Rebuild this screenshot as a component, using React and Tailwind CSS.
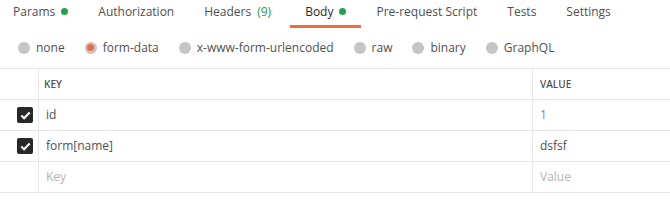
const tabs = [
  { label: "Params", dot: true },
  { label: "Authorization" },
  { label: "Headers", count: "(9)" },
  { label: "Body", dot: true, active: true },
  { label: "Pre-request Script" },
  { label: "Tests" },
  { label: "Settings" },
];

const modes = ["none", "form-data", "x-www-form-urlencoded", "raw", "binary", "GraphQL"];

const rows = [
  { key: "id", value: "1", checked: true },
  { key: "form[name]", value: "dsfsf", checked: true },
];

function Check() {
  return (
    <span className="flex h-[16px] w-[16px] items-center justify-center rounded-[2px] bg-[#282828]">
      <svg width="11" height="9" viewBox="0 0 11 9" fill="none">
        <path d="M1.3 4.6 L4.1 7.3 L9.7 1.6" stroke="white" strokeWidth="2.1" />
      </svg>
    </span>
  );
}

export default function App() {
  return (
    <div
      className="h-[211px] w-[670px] overflow-hidden bg-white text-[12px] text-[#505050]"
      style={{ fontFamily: '"Open Sans", "Noto Sans", sans-serif' }}
    >
      {/* TABS */}
      <div className="flex h-[28px] -ml-[2px]">
        {tabs.map((t) => (
          <div
            key={t.label}
            className={
              "flex items-center pl-[15px] pb-[2px] " +
              (t.count ? "pr-[19px] " : "pr-[15px] ") +
              (t.active ? "border-b-[3px] border-[#ef6c3d] text-[#2b2b2b]" : "border-b-[3px] border-transparent")
            }
          >
            <span>{t.label}</span>
            {t.count && <span className="ml-[6px] text-[#2e9b4e]">{t.count}</span>}
            {t.dot && <span className="ml-[6px] h-[7px] w-[7px] rounded-full bg-[#25a148]" />}
          </div>
        ))}
      </div>

      {/* MODES */}
      <div className="flex h-[40px] items-center pl-[18px] pb-[1px]">
        {modes.map((m) => (
          <div key={m} className="mr-[20px] flex items-center">
            <span className="mr-[6px] flex h-[12px] w-[12px] items-center justify-center rounded-full bg-[#c5c5c5]">
              {m === "form-data" && <span className="h-[7px] w-[7px] rounded-full bg-[#f26b3a]" />}
            </span>
            <span>{m}</span>
          </div>
        ))}
      </div>

      {/* TABLE */}
      <div className="border-t border-[#e6e6e6]">
        <div className="flex h-[31px] border-b border-[#e6e6e6]">
          <div className="w-[39px] border-r border-[#e6e6e6]" />
          <div className="flex flex-1 items-center pl-[5px] text-[10px] font-semibold text-[#555]">KEY</div>
          <div className="flex w-[138px] items-center border-l border-[#e6e6e6] pl-[7px] text-[10px] font-semibold text-[#555]">VALUE</div>
        </div>
        {rows.map((r) => (
          <div key={r.key} className="flex h-[31px] border-b border-[#e6e6e6]">
            <div className="flex w-[39px] items-center justify-end border-r border-[#e6e6e6] pr-[5px]">
              {r.checked && <Check />}
            </div>
            <div className="flex flex-1 items-center pl-[7px]">{r.key}</div>
            <div className="flex w-[138px] items-center border-l border-[#e6e6e6] pl-[7px]">
              <span className={r.value === "1" ? "text-[#8a8a8a]" : ""}>{r.value}</span>
            </div>
          </div>
        ))}
        <div className="flex h-[31px] border-b border-[#e6e6e6] text-[#b3b3b3]">
          <div className="w-[39px] border-r border-[#e6e6e6]" />
          <div className="flex flex-1 items-center pl-[7px]">Key</div>
          <div className="flex w-[138px] items-center border-l border-[#e6e6e6] pl-[7px]">Value</div>
        </div>
      </div>
    </div>
  );
}
